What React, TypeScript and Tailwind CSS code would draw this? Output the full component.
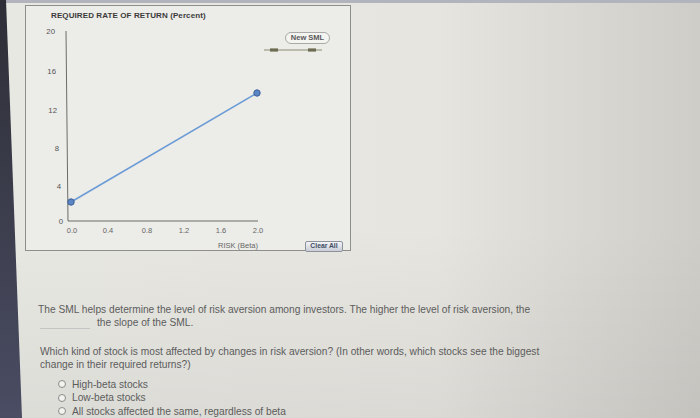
import React from 'react';

const yTicks = [
  { label: '20', y: 30, x: 54 },
  { label: '16', y: 70, x: 55 },
  { label: '12', y: 109, x: 56 },
  { label: '8', y: 147, x: 58 },
  { label: '4', y: 185, x: 60 },
  { label: '0', y: 220, x: 62 },
];

const xTicks = [
  { label: '0.0', x: 71 },
  { label: '0.4', x: 107 },
  { label: '0.8', x: 146 },
  { label: '1.2', x: 183 },
  { label: '1.6', x: 220 },
  { label: '2.0', x: 257 },
];

const options = [
  'High-beta stocks',
  'Low-beta stocks',
  'All stocks affected the same, regardless of beta',
];

const SmlChart = () => (
  <div className="relative ml-[25px] mt-[2px] w-[326px] h-[247px] border border-[#8e8e8e] bg-[#ecece8]">
    {/* plot */}
    <svg
      className="absolute inset-0"
      width="326"
      height="247"
      viewBox="25 5 326 247"
      style={{ fontFamily: '"Liberation Sans", Arial, sans-serif' }}
    >
      <line x1="65" y1="30" x2="67" y2="220" stroke="#6b6b6b" strokeWidth="1" />
      <line x1="67" y1="220" x2="257" y2="220" stroke="#6b6b6b" strokeWidth="1" />
      {yTicks.map((t) => (
        <text key={t.label} x={t.x} y={t.y + 2.5} fontSize="7.8" fill="#555" textAnchor="end">
          {t.label}
        </text>
      ))}
      {xTicks.map((t) => (
        <text key={t.label} x={t.x} y={232} fontSize="7.5" fill="#666" textAnchor="middle">
          {t.label}
        </text>
      ))}
      <text x="237" y="246.5" fontSize="7.5" fill="#666" textAnchor="middle">
        RISK (Beta)
      </text>

      {/* SML */}
      <line x1="70" y1="201" x2="256" y2="92" stroke="#6b9bd6" strokeWidth="1.5" />
      <circle cx="70" cy="201" r="3.2" fill="#5a86c6" stroke="#3d5f97" strokeWidth="1" />
      <circle cx="256" cy="92" r="3.2" fill="#5a86c6" stroke="#3d5f97" strokeWidth="1" />

      {/* legend swatch */}
      <line x1="263" y1="49" x2="321" y2="49" stroke="#8c8b70" strokeWidth="1.2" />
      <rect x="269" y="47.4" width="8" height="3.2" fill="#6d6c52" />
      <rect x="307" y="47.4" width="8" height="3.2" fill="#6d6c52" />
    </svg>

    <div className="relative pl-[25px] pt-[4px] text-[8px] font-bold tracking-[0.1px] text-[#3b3b3b] [font-family:'Liberation_Sans',Arial,sans-serif]">
      REQUIRED RATE OF RETURN (Percent)
    </div>

    <div className="absolute left-[259px] top-[26px] flex h-[12px] w-[45px] items-center justify-center rounded-full border border-[#a9a9a9] bg-[#f4f4f1] text-[7.5px] font-bold text-[#5a5a5a] [font-family:'Liberation_Sans',Arial,sans-serif]">
      New SML
    </div>

    <button className="absolute left-[279px] top-[235px] flex h-[11px] w-[38px] items-center justify-center rounded-[2px] border border-[#8c919c] bg-[linear-gradient(180deg,#f3f4f7,#c9cdd7)] text-[6.8px] font-bold text-[#3f4c63] [font-family:'Liberation_Sans',Arial,sans-serif]">
      Clear All
    </button>
  </div>
);

export default function App() {
  return (
    <div className="relative flex h-[418px] w-[700px] overflow-hidden bg-[linear-gradient(180deg,rgba(0,0,0,0)_55%,rgba(0,0,0,0.05)),linear-gradient(90deg,#e8e8e3_0%,#e6e5e0_62%,#cfcdc8_100%)] [font-family:'Liberation_Sans',Arial,sans-serif]">
      {/* screen bezel edge */}
      <div className="w-[23px] shrink-0 bg-[linear-gradient(180deg,#2d2e36,#4a4d63)] [clip-path:polygon(0_0,6px_0,22px_100%,0_100%)]" />

      <div className="-ml-[23px] flex flex-1 flex-col">
        <div className="h-[3px] bg-[#b1b3bd]" />
        <SmlChart />

        <div className="mt-[52px] pl-[38px] text-[10.2px] leading-[13.5px] text-[#5c5c5c]">
          <p>
            The SML helps determine the level of risk aversion among investors. The higher the level of risk aversion, the
          </p>
          <p className="flex items-end">
            <span className="mb-[1px] ml-[2px] inline-block w-[50px] border-b border-[#c4c4c4]" />
            <span className="ml-[7px]">the slope of the SML.</span>
          </p>

          <p className="mt-[15px] pl-[2px]">
            Which kind of stock is most affected by changes in risk aversion? (In other words, which stocks see the biggest
            <br />
            change in their required returns?)
          </p>

          <div className="mt-[6px] flex flex-col pl-[20px]">
            {options.map((o) => (
              <label key={o} className="flex h-[13.5px] items-center gap-[6px]">
                <span className="inline-block h-[8px] w-[8px] rounded-full border border-[#8a8a8a] bg-[#f2f2ee]" />
                <span>{o}</span>
              </label>
            ))}
          </div>
        </div>
      </div>
    </div>
  );
}
